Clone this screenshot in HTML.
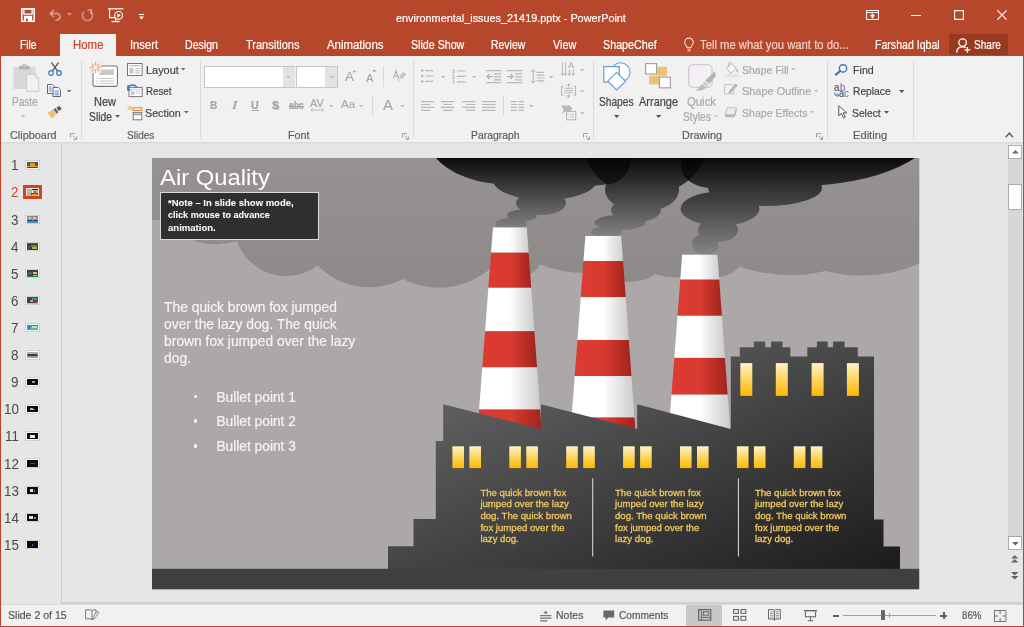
<!DOCTYPE html>
<html>
<head>
<meta charset="utf-8">
<title>PowerPoint</title>
<style>
*{box-sizing:border-box;margin:0;padding:0}
html,body{width:1024px;height:627px;overflow:hidden;background:#e6e6e6;font-family:"Liberation Sans",sans-serif;}
#app{position:absolute;left:0;top:0;width:1024px;height:627px;overflow:hidden;background:#e6e6e6;will-change:transform;}
.abs{position:absolute}
.t{position:absolute;white-space:nowrap;line-height:1;display:block;-webkit-text-stroke-width:.2px}
</style>
</head>
<body>
<div id="app">
<div class="abs" style="left:0px;top:0px;width:1024px;height:56px;background:#b7472a;"></div>
<div class="abs" style="left:60px;top:34px;width:56px;height:22px;background:#f1f1f1;"></div>
<svg class="abs" style="left:21px;top:8px;overflow:visible" width="14" height="14" viewBox="0 0 14 14"><path d="M0.8 0.8H13.2V13.2H0.8Z" fill="none" stroke="#fff" stroke-width="1.6"/><path d="M2.9 1H11.1V6.2H2.9Z" fill="none" stroke="#fff" stroke-width="1.3"/><path d="M2.9 7.8H11.1V13H2.9Z" fill="#fff"/><path d="M5 10.6H6.8V13.4H5Z" fill="#b7472a"/></svg>
<svg class="abs" style="left:48.5px;top:9px;overflow:visible" width="14" height="12" viewBox="0 0 14 12"><g fill="none" stroke="#fff" stroke-opacity=".4" stroke-width="1.9"><path d="M1.4 4.5H8A4 3.4 0 0 1 8 11.1H6.4"/><path d="M5 0.8L1.3 4.5L5 8.2"/></g></svg>
<svg class="abs" style="left:67.3px;top:13.1px" width="5.0" height="2.8" viewBox="0 0 5.0 2.8"><path d="M0 0H5.0L2.5 2.8Z" fill="rgba(255,255,255,.42)"/></svg>
<svg class="abs" style="left:81.3px;top:9px;overflow:visible" width="13" height="12" viewBox="0 0 13 12"><g fill="none" stroke="#fff" stroke-opacity=".36" stroke-width="1.9"><path d="M9.4 2.6A5 5 0 1 1 3.2 2.8"/><path d="M6.4 1H10.4V5"/></g></svg>
<svg class="abs" style="left:108px;top:8px;overflow:visible" width="16" height="15" viewBox="0 0 16 15"><g fill="none" stroke="#fff" stroke-width="1.2"><path d="M0 0.8H15.4"/><path d="M1.6 1V9.6H7"/><path d="M7.7 10V13.2"/><path d="M3.5 13.6H11.6"/><circle cx="10.6" cy="7.4" r="3.9"/></g><path d="M9.4 5.3L12.8 7.4L9.4 9.5Z" fill="#fff"/></svg>
<svg class="abs" style="left:139px;top:14px;overflow:visible" width="5" height="6" viewBox="0 0 5 6"><path d="M0 0.5H5" stroke="#fff" stroke-width="1"/><path d="M0 2.6H5L2.5 5.6Z" fill="#fff"/></svg>
<span class="t" style="left:395.50px;top:12.00px;font-size:11.6px;color:#fff;transform:scaleX(0.9362);transform-origin:0 0;">environmental_issues_21419.pptx - PowerPoint</span>
<svg class="abs" style="left:865.5px;top:10px;overflow:visible" width="13" height="10" viewBox="0 0 13 10"><g fill="none" stroke="#fff" stroke-width="1"><path d="M0.5 0.5H12.5V9.5H0.5Z"/><path d="M0.5 2.6H12.5"/></g><path d="M6.5 3.6L9.3 6.3H7.4V8.6H5.6V6.3H3.7Z" fill="#fff"/></svg>
<div class="abs" style="left:911px;top:15px;width:9.5px;height:1.2px;background:#fff;"></div>
<svg class="abs" style="left:953.5px;top:10px;overflow:visible" width="10" height="10" viewBox="0 0 10 10"><path d="M0.6 0.6H9.4V9.4H0.6Z" fill="none" stroke="#fff" stroke-width="1.1"/></svg>
<svg class="abs" style="left:996.5px;top:10px;overflow:visible" width="10" height="10" viewBox="0 0 10 10"><path d="M0.4 0.4L9.6 9.6M9.6 0.4L0.4 9.6" fill="none" stroke="#fff" stroke-width="1.1"/></svg>
<span class="t" style="left:20.00px;top:38.53px;font-size:12.6px;color:#fff;transform:scaleX(0.8176);transform-origin:0 0;">File</span>
<span class="t" style="left:72.50px;top:38.53px;font-size:12.6px;color:#c8432b;transform:scaleX(0.9074);transform-origin:0 0;">Home</span>
<span class="t" style="left:129.50px;top:38.53px;font-size:12.6px;color:#fff;transform:scaleX(0.8885);transform-origin:0 0;">Insert</span>
<span class="t" style="left:184.50px;top:38.53px;font-size:12.6px;color:#fff;transform:scaleX(0.8414);transform-origin:0 0;">Design</span>
<span class="t" style="left:245.50px;top:38.53px;font-size:12.6px;color:#fff;transform:scaleX(0.8748);transform-origin:0 0;">Transitions</span>
<span class="t" style="left:326.50px;top:38.53px;font-size:12.6px;color:#fff;transform:scaleX(0.9064);transform-origin:0 0;">Animations</span>
<span class="t" style="left:410.50px;top:38.53px;font-size:12.6px;color:#fff;transform:scaleX(0.8455);transform-origin:0 0;">Slide Show</span>
<span class="t" style="left:491.20px;top:38.53px;font-size:12.6px;color:#fff;transform:scaleX(0.8302);transform-origin:0 0;">Review</span>
<span class="t" style="left:552.50px;top:38.53px;font-size:12.6px;color:#fff;transform:scaleX(0.8603);transform-origin:0 0;">View</span>
<span class="t" style="left:603.00px;top:38.53px;font-size:12.6px;color:#fff;transform:scaleX(0.8533);transform-origin:0 0;">ShapeChef</span>
<svg class="abs" style="left:684px;top:37.5px;overflow:visible" width="10" height="14" viewBox="0 0 10 14"><g fill="none" stroke="#f3d9d2" stroke-width="1.1"><path d="M3 9.5C3 7.6 0.7 6.8 0.7 4.4A4.2 4.2 0 0 1 9.3 4.4C9.3 6.8 7 7.6 7 9.5Z"/><path d="M3.2 11.3H6.8M3.6 13H6.4"/></g></svg>
<span class="t" style="left:699.80px;top:38.53px;font-size:12.6px;color:#f0cfc6;transform:scaleX(0.8959);transform-origin:0 0;">Tell me what you want to do...</span>
<span class="t" style="left:874.70px;top:38.53px;font-size:12.6px;color:#fff;transform:scaleX(0.8397);transform-origin:0 0;">Farshad Iqbal</span>
<div class="abs" style="left:949.3px;top:33.8px;width:58.7px;height:21.2px;background:#98391f;"></div>
<svg class="abs" style="left:955.5px;top:37.5px;overflow:visible" width="15" height="15" viewBox="0 0 15 15"><g fill="none" stroke="#fff" stroke-width="1.3"><circle cx="6.6" cy="4.6" r="3.8"/><path d="M0.6 14.6C0.8 10.6 3.4 8.8 6.6 8.8C8 8.8 9 9.1 9.8 9.6"/><path d="M11.4 9V14.8M8.5 11.9H14.3"/></g></svg>
<span class="t" style="left:973.50px;top:38.53px;font-size:12.6px;color:#fff;transform:scaleX(0.8030);transform-origin:0 0;">Share</span>

<div class="abs" style="left:0px;top:56px;width:1024px;height:86px;background:#f1f1f1;"></div>
<div class="abs" style="left:0px;top:141.6px;width:1024px;height:1.6px;background:#dadada;"></div>
<div class="abs" style="left:0px;top:143.2px;width:1024px;height:1.3px;background:#e1e1e1;"></div>
<svg class="abs" style="left:12.5px;top:63.5px;overflow:visible" width="27" height="28" viewBox="0 0 27 28"><rect x="0.5" y="3" width="22" height="22" rx="1" fill="#d9d7d9"/><path d="M6 3.2V1.8H9A2.4 2.4 0 0 1 13.6 1.8H16.6V5.4H6Z" fill="#b4b2b4"/><circle cx="11.3" cy="2.2" r="0.9" fill="#e4e2e4"/><path d="M13.7 10.3H22.2L25.8 13.9V27.3H13.7Z" fill="#f3eff3" stroke="#cbc8cb" stroke-width="0.9"/><path d="M22.2 10.3V13.9H25.8" fill="none" stroke="#cbc8cb" stroke-width="0.9"/></svg>
<span class="t" style="left:11.90px;top:96.00px;font-size:12.4px;color:#a8a8a8;transform:scaleX(0.8105);transform-origin:0 0;">Paste</span>
<svg class="abs" style="left:21.4px;top:114.7px" width="4.600000000000001" height="2.58" viewBox="0 0 4.600000000000001 2.58"><path d="M0 0H4.600000000000001L2.3000000000000007 2.58Z" fill="#bdbdbd"/></svg>
<svg class="abs" style="left:47.5px;top:62px;overflow:visible" width="14" height="14" viewBox="0 0 14 14"><g fill="none" stroke="#555" stroke-width="1.3"><path d="M3.4 0.4L9.6 9.2M10.6 0.4L4.4 9.2"/></g><g fill="none" stroke="#3b78c4" stroke-width="1.2"><circle cx="3" cy="11" r="2.3"/><circle cx="11" cy="11" r="2.3"/></g></svg>
<svg class="abs" style="left:47px;top:84px;overflow:visible" width="14" height="13" viewBox="0 0 14 13"><g fill="#fff" stroke="#666" stroke-width="1"><path d="M0.5 0.5H5.6L7.6 2.5V9.5H0.5Z"/><path d="M6 3.5H11.2L13.5 5.8V12.5H6Z"/></g><path d="M1.8 3H4.8M1.8 5H4.8M1.8 7H4.8M7.5 7H12M7.5 9H12M7.5 10.8H12" stroke="#3b78c4" stroke-width="0.9"/></svg>
<svg class="abs" style="left:67.4px;top:89.8px" width="4.3999999999999915" height="2.46" viewBox="0 0 4.3999999999999915 2.46"><path d="M0 0H4.3999999999999915L2.1999999999999957 2.46Z" fill="#666"/></svg>
<svg class="abs" style="left:47px;top:105.5px;overflow:visible" width="15" height="13" viewBox="0 0 15 13"><path d="M0.4 6.8L6.2 3.6L9.4 8.2L5.2 12.6Z" fill="#eec06c"/><path d="M6.4 3.2L8.6 2L11.4 6.2L9.6 7.8Z" fill="#666"/><path d="M9.4 1.4L12.6 0L14.6 3L11.8 5Z" fill="#555"/></svg>
<span class="t" style="left:9.80px;top:128.68px;font-size:11.6px;color:#5c5c5c;transform:scaleX(0.9385);transform-origin:0 0;">Clipboard</span>
<svg class="abs" style="left:70px;top:132.5px;overflow:visible" width="7" height="6.5" viewBox="0 0 7 6.5"><path d="M0.5 4.5V0.5H5" fill="none" stroke="#a2a2a2" stroke-width="1"/><path d="M2.6 2.6L6.4 6.2M6.6 3.4V6.4H3.6" fill="none" stroke="#a2a2a2" stroke-width="1"/></svg>
<div class="abs" style="left:80.5px;top:60.5px;width:1px;height:77.5px;background:#dadada;"></div>
<svg class="abs" style="left:90px;top:62px;overflow:visible" width="28" height="25" viewBox="0 0 28 25"><rect x="3" y="4" width="24.4" height="20.4" rx="1.6" fill="#fff" stroke="#777" stroke-width="1.1"/><rect x="9" y="7.4" width="15" height="5.6" fill="#c9c9c9"/><path d="M6.4 16.4H8M9.6 16.4H24M6.4 19H8M9.6 19H24M6.4 21.4H8M9.6 21.4H24" stroke="#c4c4c4" stroke-width="1"/><rect x="0" y="0" width="11" height="11" fill="#f1f1f1"/><g stroke="#eab54a" stroke-width="1.3"><path d="M5.5 0V11M0 5.5H11M1.6 1.6L9.4 9.4M9.4 1.6L1.6 9.4"/></g><circle cx="5.5" cy="5.5" r="1.9" fill="#f1f1f1"/></svg>
<span class="t" style="left:94.00px;top:96.00px;font-size:12.4px;color:#444444;transform:scaleX(0.8869);transform-origin:0 0;">New</span>
<span class="t" style="left:89.00px;top:111.00px;font-size:12.4px;color:#444444;transform:scaleX(0.8341);transform-origin:0 0;">Slide</span>
<svg class="abs" style="left:114.8px;top:115.2px" width="5.0" height="2.8" viewBox="0 0 5.0 2.8"><path d="M0 0H5.0L2.5 2.8Z" fill="#555"/></svg>
<svg class="abs" style="left:126.8px;top:62.8px;overflow:visible" width="16" height="13" viewBox="0 0 16 13"><rect x="0.5" y="0.5" width="14.6" height="12" fill="#fff" stroke="#777" stroke-width="1"/><path d="M2.4 2.8H13.2" stroke="#bbb" stroke-width="1.2"/><rect x="2.4" y="5" width="4.2" height="5.6" fill="#c9c9c9"/><path d="M8 5.6H13M8 7.8H13M8 10H13" stroke="#bbb" stroke-width="1"/></svg>
<span class="t" style="left:145.50px;top:63.78px;font-size:11.6px;color:#444444;transform:scaleX(0.9417);transform-origin:0 0;">Layout</span>
<svg class="abs" style="left:181.4px;top:68.4px" width="4.400000000000006" height="2.46" viewBox="0 0 4.400000000000006 2.46"><path d="M0 0H4.400000000000006L2.200000000000003 2.46Z" fill="#666"/></svg>
<svg class="abs" style="left:126.5px;top:84px;overflow:visible" width="16" height="13" viewBox="0 0 16 13"><rect x="2" y="3.4" width="13.2" height="9.2" fill="#fff" stroke="#777" stroke-width="1"/><rect x="4" y="7" width="3.6" height="4" fill="#c9c9c9"/><path d="M9 7.4H13.4M9 9.2H13.4M4 5.4H13.4" stroke="#c4c4c4" stroke-width="0.9"/><path d="M1 6.4V1.6" stroke="#3b78c4" stroke-width="1.4"/><path d="M1 3.6C2.6 0.6 7.6 0 9.8 3.2" fill="none" stroke="#3b78c4" stroke-width="1.5"/><path d="M0.2 6.6H4.2L0.2 2.8Z" fill="#3b78c4"/></svg>
<span class="t" style="left:145.50px;top:85.28px;font-size:11.6px;color:#444444;transform:scaleX(0.8415);transform-origin:0 0;">Reset</span>
<svg class="abs" style="left:127px;top:104.6px;overflow:visible" width="16" height="15.5" viewBox="0 0 16 15.5"><g stroke="#eab54a" stroke-width="0.6"><path d="M3 0V6M0 3H6M0.9 0.9L5.1 5.1M5.1 0.9L0.9 5.1"/></g><rect x="6.2" y="2.8" width="8.6" height="2.6" fill="#fff" stroke="#e8823c" stroke-width="1.1"/><rect x="6.2" y="7.4" width="8.6" height="7.4" fill="#fff" stroke="#777" stroke-width="1"/><path d="M6.2 9.4H14.8" stroke="#999" stroke-width="1.6"/></svg>
<span class="t" style="left:145.30px;top:106.78px;font-size:11.6px;color:#444444;transform:scaleX(0.9252);transform-origin:0 0;">Section</span>
<svg class="abs" style="left:184.3px;top:111.1px" width="4.699999999999989" height="2.63" viewBox="0 0 4.699999999999989 2.63"><path d="M0 0H4.699999999999989L2.3499999999999943 2.63Z" fill="#666"/></svg>
<span class="t" style="left:126.60px;top:128.68px;font-size:11.6px;color:#5c5c5c;transform:scaleX(0.8640);transform-origin:0 0;">Slides</span>
<div class="abs" style="left:199.5px;top:60.5px;width:1px;height:77.5px;background:#dadada;"></div>
<div class="abs" style="left:204px;top:66.3px;width:91.4px;height:21.6px;background:#fff;border:1px solid #c6c6c6"></div>
<div class="abs" style="left:282.5px;top:67.3px;width:12px;height:19.6px;background:#e3e3e3;"></div>
<svg class="abs" style="left:286.4px;top:76.0px" width="4.400000000000034" height="2.46" viewBox="0 0 4.400000000000034 2.46"><path d="M0 0H4.400000000000034L2.200000000000017 2.46Z" fill="#bdbdbd"/></svg>
<div class="abs" style="left:296px;top:66.3px;width:42.4px;height:21.6px;background:#fff;border:1px solid #c6c6c6"></div>
<div class="abs" style="left:325.4px;top:67.3px;width:12px;height:19.6px;background:#e3e3e3;"></div>
<svg class="abs" style="left:329.5px;top:76.0px" width="4.399999999999977" height="2.46" viewBox="0 0 4.399999999999977 2.46"><path d="M0 0H4.399999999999977L2.1999999999999886 2.46Z" fill="#bdbdbd"/></svg>
<span class="t" style="left:344.60px;top:70.49px;font-size:13.6px;color:#a8a8a8;transform:scaleX(0.9921);transform-origin:0 0;">A</span>
<svg class="abs" style="left:352px;top:70.2px;overflow:visible" width="4.6" height="2.3" viewBox="0 0 4.6 2.3"><path d="M0 2.3H4.6L2.3 0Z" fill="#b0b0b0"/></svg>
<span class="t" style="left:365.60px;top:73.03px;font-size:10.6px;color:#a8a8a8;transform:scaleX(1.0466);transform-origin:0 0;">A</span>
<svg class="abs" style="left:372.2px;top:70.0px" width="4.600000000000023" height="2.58" viewBox="0 0 4.600000000000023 2.58"><path d="M0 0H4.600000000000023L2.3000000000000114 2.58Z" fill="#b0b0b0"/></svg>
<div class="abs" style="left:383.3px;top:66.3px;width:1px;height:20.5px;background:#d8d8d8;"></div>
<svg class="abs" style="left:392.5px;top:69.8px;overflow:visible" width="14" height="14" viewBox="0 0 14 14"><path d="M6 6.4L10.4 1.6L13.4 4.4L9 9.4Z" fill="#c9c9c9"/><path d="M5.2 7.6L8 10.4L6.6 12L3.6 9.4Z" fill="#dcdcdc"/><path d="M0.4 8.6L3 0.8L5.6 8.6M1.3 6H4.7" fill="none" stroke="#b0b0b0" stroke-width="1.1"/></svg>
<span class="t" style="left:209.90px;top:99.55px;font-size:11.4px;color:#a8a8a8;font-weight:bold;transform:scaleX(0.8867);transform-origin:0 0;">B</span>
<span class="t" style="left:230.60px;top:99.07px;font-size:12.2px;color:#a8a8a8;font-style:italic;transform:scaleX(1.7703);transform-origin:0 0;font-family:'Liberation Serif',serif;-webkit-text-stroke-width:.1px;">I</span>
<span class="t" style="left:251.00px;top:100.09px;font-size:11px;color:#a4a4a4;font-weight:bold;transform:scaleX(0.9693);transform-origin:0 0;">U</span>
<div class="abs" style="left:251px;top:110.4px;width:7.8px;height:1px;background:#a8a8a8;"></div>
<span class="t" style="left:272.30px;top:99.61px;font-size:11.8px;color:#a0a0a0;font-weight:bold;transform:scaleX(0.8766);transform-origin:0 0;text-shadow:1px 1px 1px #c8c8c8;">S</span>
<span class="t" style="left:289.00px;top:100.73px;font-size:10px;color:#a4a4a4;font-weight:bold;transform:scaleX(0.8647);transform-origin:0 0;">abc</span>
<div class="abs" style="left:288.6px;top:105.6px;width:15.6px;height:1px;background:#a8a8a8;"></div>
<span class="t" style="left:310.00px;top:98.03px;font-size:10.6px;color:#a8a8a8;transform:scaleX(1.0259);transform-origin:0 0;">AV</span>
<svg class="abs" style="left:309.6px;top:107.6px;overflow:visible" width="14.4" height="4" viewBox="0 0 14.4 4"><path d="M1 2H13.4M2.6 0.4L0.8 2L2.6 3.6M11.8 0.4L13.6 2L11.8 3.6" fill="none" stroke="#b4b4b4" stroke-width="0.9"/></svg>
<svg class="abs" style="left:328.5px;top:104.9px" width="4.399999999999977" height="2.46" viewBox="0 0 4.399999999999977 2.46"><path d="M0 0H4.399999999999977L2.1999999999999886 2.46Z" fill="#bdbdbd"/></svg>
<span class="t" style="left:340.50px;top:99.41px;font-size:11.8px;color:#a8a8a8;transform:scaleX(0.9769);transform-origin:0 0;">Aa</span>
<svg class="abs" style="left:359.3px;top:104.9px" width="4.399999999999977" height="2.46" viewBox="0 0 4.399999999999977 2.46"><path d="M0 0H4.399999999999977L2.1999999999999886 2.46Z" fill="#bdbdbd"/></svg>
<div class="abs" style="left:372.3px;top:95.5px;width:1px;height:20px;background:#d8d8d8;"></div>
<span class="t" style="left:382.60px;top:98.35px;font-size:14px;color:#a8a8a8;transform:scaleX(1.0708);transform-origin:0 0;">A</span>
<svg class="abs" style="left:400.2px;top:104.9px" width="4.600000000000023" height="2.58" viewBox="0 0 4.600000000000023 2.58"><path d="M0 0H4.600000000000023L2.3000000000000114 2.58Z" fill="#bdbdbd"/></svg>
<span class="t" style="left:287.80px;top:128.68px;font-size:11.6px;color:#5c5c5c;transform:scaleX(0.9263);transform-origin:0 0;">Font</span>
<svg class="abs" style="left:402.3px;top:132.5px;overflow:visible" width="7" height="6.5" viewBox="0 0 7 6.5"><path d="M0.5 4.5V0.5H5" fill="none" stroke="#a2a2a2" stroke-width="1"/><path d="M2.6 2.6L6.4 6.2M6.6 3.4V6.4H3.6" fill="none" stroke="#a2a2a2" stroke-width="1"/></svg>
<div class="abs" style="left:412.8px;top:60.5px;width:1px;height:77.5px;background:#dadada;"></div>
<svg class="abs" style="left:420.8px;top:69.4px;overflow:visible" width="13" height="14" viewBox="0 0 13 14"><g fill="#b4b4b4"><circle cx="1.3" cy="1.6" r="1.2"/><circle cx="1.3" cy="7" r="1.2"/><circle cx="1.3" cy="12.4" r="1.2"/></g><path d="M4.4 1.6H12.4M4.4 7H12.4M4.4 12.4H12.4" stroke="#b8b8b8" stroke-width="1.2"/></svg>
<svg class="abs" style="left:440.7px;top:76.0px" width="4.400000000000034" height="2.46" viewBox="0 0 4.400000000000034 2.46"><path d="M0 0H4.400000000000034L2.200000000000017 2.46Z" fill="#bdbdbd"/></svg>
<svg class="abs" style="left:452px;top:69px;overflow:visible" width="14" height="15" viewBox="0 0 14 15"><path d="M5 2H13.8M5 7.4H13.8M5 12.8H13.8" stroke="#b8b8b8" stroke-width="1.2"/><g fill="none" stroke="#b0b0b0" stroke-width="0.9"><path d="M0.6 1L1.8 0.4V3.4M0.4 3.6H3"/><path d="M0.4 6C1.4 5.2 2.8 5.8 2.2 7L0.4 9H3"/><path d="M0.4 11C2.4 10.4 3 12.2 1.2 12.6C3.2 12.8 2.8 14.8 0.4 14.2"/></g></svg>
<svg class="abs" style="left:472.3px;top:76.0px" width="4.399999999999977" height="2.46" viewBox="0 0 4.399999999999977 2.46"><path d="M0 0H4.399999999999977L2.1999999999999886 2.46Z" fill="#bdbdbd"/></svg>
<svg class="abs" style="left:486px;top:69.6px;overflow:visible" width="15.4" height="13.4" viewBox="0 0 15.4 13.4"><path d="M0 0.7H15.2M8 3.8H15.2M8 6.8H15.2M8 9.8H15.2M0 12.7H15.2" stroke="#b8b8b8" stroke-width="1.2"/><path d="M6.6 6.6H1.4M3.6 4L1 6.6L3.6 9.2" fill="none" stroke="#b0b0b0" stroke-width="1.2"/></svg>
<svg class="abs" style="left:506.8px;top:69.6px;overflow:visible" width="15.4" height="13.4" viewBox="0 0 15.4 13.4"><path d="M0 0.7H15.2M8 3.8H15.2M8 6.8H15.2M8 9.8H15.2M0 12.7H15.2" stroke="#b8b8b8" stroke-width="1.2"/><path d="M0.4 6.6H5.6M3.4 4L6 6.6L3.4 9.2" fill="none" stroke="#b0b0b0" stroke-width="1.2"/></svg>
<svg class="abs" style="left:531px;top:69.2px;overflow:visible" width="14" height="14.8" viewBox="0 0 14 14.8"><path d="M5.6 3.4H13.4M5.6 6.2H13.4M5.6 9H13.4M5.6 11.8H13.4" stroke="#b8b8b8" stroke-width="1.2"/><path d="M2.2 0.8V14M0.2 3L2.2 0.8L4.2 3M0.2 11.8L2.2 14L4.2 11.8" fill="none" stroke="#b0b0b0" stroke-width="1"/></svg>
<svg class="abs" style="left:549px;top:76.0px" width="4.600000000000023" height="2.58" viewBox="0 0 4.600000000000023 2.58"><path d="M0 0H4.600000000000023L2.3000000000000114 2.58Z" fill="#bdbdbd"/></svg>
<svg class="abs" style="left:420.8px;top:100.8px;overflow:visible" width="13.4" height="11.6" viewBox="0 0 13.4 11.6"><path d="M0.0 0.6H13.2M0.0 3.5H9.2M0.0 6.4H13.2M0.0 9.3H9.2" stroke="#b8b8b8" stroke-width="1.2" fill="none"/></svg>
<svg class="abs" style="left:441px;top:100.8px;overflow:visible" width="13.4" height="11.6" viewBox="0 0 13.4 11.6"><path d="M0.0 0.6H13.4M2.4 3.5H11.0M0.0 6.4H13.4M2.0 9.3H11.4" stroke="#b8b8b8" stroke-width="1.2" fill="none"/></svg>
<svg class="abs" style="left:462px;top:100.8px;overflow:visible" width="13.4" height="11.6" viewBox="0 0 13.4 11.6"><path d="M0.2 0.6H13.4M4.2 3.5H13.4M0.2 6.4H13.4M4.2 9.3H13.4" stroke="#b8b8b8" stroke-width="1.2" fill="none"/></svg>
<svg class="abs" style="left:482.4px;top:100.8px;overflow:visible" width="13.6" height="11.6" viewBox="0 0 13.6 11.6"><path d="M0.0 0.6H13.6M0.0 3.5H13.6M0.0 6.4H13.6M0.0 9.3H13.6" stroke="#b8b8b8" stroke-width="1.2" fill="none"/></svg>
<div class="abs" style="left:503.3px;top:95.5px;width:1px;height:20px;background:#d8d8d8;"></div>
<svg class="abs" style="left:511px;top:100.8px;overflow:visible" width="13" height="12" viewBox="0 0 13 12"><path d="M0 0.6H5.8M7.2 0.6H13M0 3.5H5.8M7.2 3.5H13M0 6.4H5.8M7.2 6.4H13M0 9.3H5.8M7.2 9.3H13" stroke="#b8b8b8" stroke-width="1.2"/></svg>
<svg class="abs" style="left:529.3px;top:104.9px" width="4.600000000000023" height="2.58" viewBox="0 0 4.600000000000023 2.58"><path d="M0 0H4.600000000000023L2.3000000000000114 2.58Z" fill="#bdbdbd"/></svg>
<svg class="abs" style="left:561px;top:62px;overflow:visible" width="15" height="15" viewBox="0 0 15 15"><path d="M1.4 0.4V13M0 11.4L1.4 13.6L2.8 11.4M4.6 0.4V13M3.2 11.4L4.6 13.6L6 11.4M8.4 7.4V13M7 11.4L8.4 13.6L9.8 11.4M12.2 7.4V13M10.8 11.4L12.2 13.6L13.6 11.4" fill="none" stroke="#b0b0b0" stroke-width="0.9"/><path d="M7.6 6L10.2 0.4L12.8 6M8.4 4.2H12" fill="none" stroke="#b0b0b0" stroke-width="1"/></svg>
<svg class="abs" style="left:580px;top:68.5px" width="4.600000000000023" height="2.58" viewBox="0 0 4.600000000000023 2.58"><path d="M0 0H4.600000000000023L2.3000000000000114 2.58Z" fill="#bdbdbd"/></svg>
<svg class="abs" style="left:561px;top:83.2px;overflow:visible" width="15.2" height="15" viewBox="0 0 15.2 15"><path d="M2.4 3.2H0.6V12.2H2.4M12.8 3.2H14.6V12.2H12.8" fill="none" stroke="#b0b0b0" stroke-width="1"/><path d="M3.4 5.4H11.8M3.4 7.6H11.8M3.4 9.8H11.8" stroke="#c4c4c4" stroke-width="1.1"/><path d="M5.4 2.6L7.6 0.2L9.8 2.6ZM5.4 12.6L7.6 15L9.8 12.6Z" fill="#b8b8b8"/><path d="M7.6 1V4M7.6 11V14" stroke="#b8b8b8" stroke-width="1"/></svg>
<svg class="abs" style="left:580px;top:90.2px" width="4.600000000000023" height="2.58" viewBox="0 0 4.600000000000023 2.58"><path d="M0 0H4.600000000000023L2.3000000000000114 2.58Z" fill="#bdbdbd"/></svg>
<svg class="abs" style="left:561px;top:104.6px;overflow:visible" width="15.4" height="15.4" viewBox="0 0 15.4 15.4"><path d="M0.4 0.4H8.6L11.4 3.4L9 6.6H3.6L0.4 9.4L2.6 5Z" fill="#b9b9b9"/><rect x="5.6" y="6.6" width="9.2" height="8.2" fill="#f4f0f4" stroke="#b0b0b0" stroke-width="1"/><path d="M7.4 9.4H8.4M9.6 9.4H13M7.4 12H8.4M9.6 12H13" stroke="#b8b8b8" stroke-width="1"/></svg>
<svg class="abs" style="left:580px;top:111.8px" width="4.600000000000023" height="2.58" viewBox="0 0 4.600000000000023 2.58"><path d="M0 0H4.600000000000023L2.3000000000000114 2.58Z" fill="#bdbdbd"/></svg>
<span class="t" style="left:470.80px;top:128.68px;font-size:11.6px;color:#5c5c5c;transform:scaleX(0.8953);transform-origin:0 0;">Paragraph</span>
<svg class="abs" style="left:582.7px;top:132.5px;overflow:visible" width="7" height="6.5" viewBox="0 0 7 6.5"><path d="M0.5 4.5V0.5H5" fill="none" stroke="#a2a2a2" stroke-width="1"/><path d="M2.6 2.6L6.4 6.2M6.6 3.4V6.4H3.6" fill="none" stroke="#a2a2a2" stroke-width="1"/></svg>
<div class="abs" style="left:593.3px;top:60.5px;width:1px;height:77.5px;background:#dadada;"></div>
<svg class="abs" style="left:602.6px;top:62px;overflow:visible" width="29" height="29" viewBox="0 0 29 29"><circle cx="17.6" cy="10.2" r="9.4" fill="#fff" stroke="#6a9fd6" stroke-width="1.1"/><rect x="0.8" y="4.6" width="15.4" height="15.4" fill="#fff" stroke="#6a9fd6" stroke-width="1.3"/><path d="M13.6 10.4L22.6 19.2L13.6 28L4.8 19.2Z" fill="#fff" stroke="#6a9fd6" stroke-width="1.2"/></svg>
<span class="t" style="left:599.40px;top:96.00px;font-size:12.4px;color:#444444;transform:scaleX(0.8203);transform-origin:0 0;">Shapes</span>
<svg class="abs" style="left:614px;top:114.7px" width="5.399999999999977" height="3.02" viewBox="0 0 5.399999999999977 3.02"><path d="M0 0H5.399999999999977L2.6999999999999886 3.02Z" fill="#555"/></svg>
<svg class="abs" style="left:645px;top:63.4px;overflow:visible" width="26.4" height="25.6" viewBox="0 0 26.4 25.6"><rect x="12.2" y="3.8" width="9.8" height="9" fill="#ecc370"/><rect x="4" y="12.6" width="10.6" height="8.8" fill="#ecc370"/><rect x="0.6" y="0.6" width="11" height="10.4" fill="#fff" stroke="#a2a2a2" stroke-width="1.2"/><rect x="14.4" y="14.2" width="11" height="10.6" fill="#fff" stroke="#a2a2a2" stroke-width="1.2"/></svg>
<span class="t" style="left:638.90px;top:96.00px;font-size:12.4px;color:#444444;transform:scaleX(0.8863);transform-origin:0 0;">Arrange</span>
<svg class="abs" style="left:656.3px;top:114.7px" width="5.2000000000000455" height="2.91" viewBox="0 0 5.2000000000000455 2.91"><path d="M0 0H5.2000000000000455L2.6000000000000227 2.91Z" fill="#555"/></svg>
<svg class="abs" style="left:688px;top:64px;overflow:visible" width="28" height="28" viewBox="0 0 28 28"><rect x="0.7" y="0.7" width="23.4" height="22.6" rx="4.6" fill="#f4eff4" stroke="#cdcdcd" stroke-width="1.3"/><path d="M27.4 7L27.6 12.4L21.4 19.8L17 16.4Z" fill="#b4b4b4"/><path d="M16.4 17.4L20.6 20.6L18.8 22.8L14.6 19.6Z" fill="#c9c9c9"/><path d="M14.2 20.2L18.2 23.2C16.4 26.6 10.6 27 7 26.8C10.4 25.4 11.4 22 14.2 20.2Z" fill="#bdbdbd"/></svg>
<span class="t" style="left:686.70px;top:96.00px;font-size:12.4px;color:#a8a8a8;transform:scaleX(0.9149);transform-origin:0 0;">Quick</span>
<span class="t" style="left:682.80px;top:111.00px;font-size:12.4px;color:#a8a8a8;transform:scaleX(0.8233);transform-origin:0 0;">Styles</span>
<svg class="abs" style="left:714px;top:115.4px" width="4" height="2.24" viewBox="0 0 4 2.24"><path d="M0 0H4L2.0 2.24Z" fill="#c4c4c4"/></svg>
<svg class="abs" style="left:724px;top:61.6px;overflow:visible" width="15" height="15" viewBox="0 0 15 15"><path d="M2.4 6.6L7.6 1.6L12.2 6.4L7 11.2Z" fill="#fbf8fb" stroke="#b4b4b4" stroke-width="1"/><path d="M4.4 4.6V1.8C4.4 -0.2 7.2 -0.2 7.2 1.8V2" fill="none" stroke="#b4b4b4" stroke-width="1"/><path d="M12.6 6.6C14.2 8.4 14.6 9.6 13.4 10.2C12.2 10.4 12 8.6 12.6 6.6Z" fill="#b4b4b4"/><rect x="0" y="12.2" width="14.6" height="2.8" fill="#e6dfe6"/></svg>
<span class="t" style="left:741.50px;top:63.78px;font-size:11.6px;color:#a8a8a8;transform:scaleX(0.9034);transform-origin:0 0;">Shape Fill</span>
<svg class="abs" style="left:791px;top:68.4px" width="4.600000000000023" height="2.58" viewBox="0 0 4.600000000000023 2.58"><path d="M0 0H4.600000000000023L2.3000000000000114 2.58Z" fill="#c4c4c4"/></svg>
<svg class="abs" style="left:724px;top:83px;overflow:visible" width="15" height="12" viewBox="0 0 15 12"><path d="M8.4 1.6H0.6V10.8H9.8V7" fill="none" stroke="#c0c0c0" stroke-width="1"/><path d="M11.4 0.6L13.8 2.6L7 9.8L4.2 10.8L5 8Z" fill="#b8b8b8"/></svg>
<span class="t" style="left:741.50px;top:85.28px;font-size:11.6px;color:#a8a8a8;transform:scaleX(0.9426);transform-origin:0 0;">Shape Outline</span>
<svg class="abs" style="left:813.6px;top:89.9px" width="4.600000000000023" height="2.58" viewBox="0 0 4.600000000000023 2.58"><path d="M0 0H4.600000000000023L2.3000000000000114 2.58Z" fill="#c4c4c4"/></svg>
<svg class="abs" style="left:724px;top:106.8px;overflow:visible" width="14" height="11" viewBox="0 0 14 11"><path d="M3.4 0.8H12.6L10.2 7.8H0.8Z" fill="#f0ebf0" stroke="#c0c0c0" stroke-width="1"/><path d="M0.8 7.8H10.2L12.8 1.4V3.4L10.6 10.2H1.4Z" fill="#b4b4b4"/></svg>
<span class="t" style="left:741.50px;top:106.68px;font-size:11.6px;color:#a8a8a8;transform:scaleX(0.9095);transform-origin:0 0;">Shape Effects</span>
<svg class="abs" style="left:810px;top:111.2px" width="4.600000000000023" height="2.58" viewBox="0 0 4.600000000000023 2.58"><path d="M0 0H4.600000000000023L2.3000000000000114 2.58Z" fill="#c4c4c4"/></svg>
<span class="t" style="left:682.40px;top:128.68px;font-size:11.6px;color:#5c5c5c;transform:scaleX(0.9424);transform-origin:0 0;">Drawing</span>
<svg class="abs" style="left:816px;top:132.5px;overflow:visible" width="7" height="6.5" viewBox="0 0 7 6.5"><path d="M0.5 4.5V0.5H5" fill="none" stroke="#a2a2a2" stroke-width="1"/><path d="M2.6 2.6L6.4 6.2M6.6 3.4V6.4H3.6" fill="none" stroke="#a2a2a2" stroke-width="1"/></svg>
<div class="abs" style="left:827.4px;top:60.5px;width:1px;height:77.5px;background:#dadada;"></div>
<svg class="abs" style="left:835px;top:63.6px;overflow:visible" width="13" height="12" viewBox="0 0 13 12"><circle cx="8" cy="4.4" r="3.6" fill="#fff" stroke="#3b78c4" stroke-width="1.5"/><path d="M5.2 7L0.8 10.6" stroke="#3b78c4" stroke-width="2.2" stroke-linecap="round"/></svg>
<span class="t" style="left:852.50px;top:63.78px;font-size:11.6px;color:#444444;transform:scaleX(0.9217);transform-origin:0 0;">Find</span>
<span class="t" style="left:833.90px;top:81.93px;font-size:10.6px;color:#555;transform:scaleX(0.9329);transform-origin:0 0;">a</span>
<span class="t" style="left:839.70px;top:81.93px;font-size:10.6px;color:#9a5fc4;transform:scaleX(0.9160);transform-origin:0 0;">b</span>
<span class="t" style="left:838.90px;top:88.43px;font-size:10.6px;color:#555;transform:scaleX(0.8651);transform-origin:0 0;">a</span>
<span class="t" style="left:844.20px;top:88.43px;font-size:10.6px;color:#4d8fd6;transform:scaleX(0.9057);transform-origin:0 0;">c</span>
<svg class="abs" style="left:833.8px;top:92.4px;overflow:visible" width="5" height="5" viewBox="0 0 5 5"><path d="M1 0.4V3.2H4.6M3 1.6L4.8 3.2L3 4.8" fill="none" stroke="#3b78c4" stroke-width="1"/></svg>
<span class="t" style="left:852.50px;top:85.28px;font-size:11.6px;color:#444444;transform:scaleX(0.8834);transform-origin:0 0;">Replace</span>
<svg class="abs" style="left:899.2px;top:89.9px" width="5.399999999999977" height="3.02" viewBox="0 0 5.399999999999977 3.02"><path d="M0 0H5.399999999999977L2.6999999999999886 3.02Z" fill="#555"/></svg>
<svg class="abs" style="left:837.6px;top:105.2px;overflow:visible" width="10" height="14" viewBox="0 0 10 14"><path d="M0.8 0.8V10.8L3.4 8.4L5.4 12.8L7.2 12L5.2 7.8H8.6Z" fill="#fff" stroke="#555" stroke-width="1"/></svg>
<span class="t" style="left:852.30px;top:106.68px;font-size:11.6px;color:#444444;transform:scaleX(0.8902);transform-origin:0 0;">Select</span>
<svg class="abs" style="left:883.8px;top:111.1px" width="5.0" height="2.8" viewBox="0 0 5.0 2.8"><path d="M0 0H5.0L2.5 2.8Z" fill="#555"/></svg>
<span class="t" style="left:853.30px;top:128.68px;font-size:11.6px;color:#5c5c5c;transform:scaleX(0.9614);transform-origin:0 0;">Editing</span>
<div class="abs" style="left:913px;top:60.5px;width:1px;height:77.5px;background:#dadada;"></div>
<svg class="abs" style="left:1005.4px;top:132px;overflow:visible" width="8.6" height="6" viewBox="0 0 8.6 6"><path d="M0.6 5.2L4.3 1.2L8 5.2" fill="none" stroke="#666" stroke-width="1.5"/></svg>

<div class="abs" style="left:61px;top:145px;width:1px;height:458px;background:#c9c9c9;"></div>
<span class="t" style="left:10.95px;top:157.81px;font-size:14.4px;color:#484848;transform:scaleX(0.9300);transform-origin:0 0;-webkit-text-stroke-width:0;">1</span>
<div class="abs" style="left:25.3px;top:160.29999999999998px;width:14.4px;height:9.5px;background:#fbfbfb;border:1px solid #d0d0d0;"></div>
<div class="abs" style="left:27px;top:161.95px;width:11px;height:6.5px;background:#55534f;"></div>
<div class="abs" style="left:29.7px;top:163.36px;width:5.41px;height:2.28px;background:#d8a018;"></div>
<div class="abs" style="left:27.0px;top:165.64px;width:11.0px;height:1.58px;background:#f0a01c;"></div>
<div class="abs" style="left:27.0px;top:167.22px;width:11.0px;height:1.23px;background:#2c5a2c;"></div>
<span class="t" style="left:10.95px;top:184.81px;font-size:14.4px;color:#d2452c;transform:scaleX(0.9300);transform-origin:0 0;-webkit-text-stroke-width:0;">2</span>
<div class="abs" style="left:23.3px;top:184.99999999999997px;width:18.7px;height:14px;background:#d4431f;"></div>
<div class="abs" style="left:26px;top:187.99999999999997px;width:13px;height:8.4px;background:#fbeeea;"></div>
<div class="abs" style="left:27px;top:189.05px;width:11px;height:6.5px;background:#b4b0ae;"></div>
<div class="abs" style="left:31.87px;top:189.05px;width:6.13px;height:1.05px;background:#2a2a2a;"></div>
<div class="abs" style="left:31.87px;top:190.28px;width:1.44px;height:2.64px;background:#f0f0f0;"></div>
<div class="abs" style="left:34.21px;top:190.81px;width:2.16px;height:2.28px;background:#d8484a;"></div>
<div class="abs" style="left:31.15px;top:193.09px;width:6.67px;height:2.28px;background:#4a4a42;"></div>
<div class="abs" style="left:32.05px;top:193.62px;width:4.87px;height:1.05px;background:#d8b030;"></div>
<div class="abs" style="left:27.54px;top:191.33px;width:2.34px;height:0.7px;background:#d8c8a0;"></div>
<span class="t" style="left:10.95px;top:212.81px;font-size:14.4px;color:#484848;transform:scaleX(0.9300);transform-origin:0 0;-webkit-text-stroke-width:0;">3</span>
<div class="abs" style="left:25.3px;top:214.49999999999997px;width:14.4px;height:9.5px;background:#fbfbfb;border:1px solid #d0d0d0;"></div>
<div class="abs" style="left:27px;top:216.15px;width:11px;height:6.5px;background:#9a9a9a;"></div>
<div class="abs" style="left:27.0px;top:216.15px;width:11.0px;height:1.76px;background:#888;"></div>
<div class="abs" style="left:28.8px;top:217.2px;width:2.7px;height:1.41px;background:#cfcfcf;"></div>
<div class="abs" style="left:32.86px;top:217.03px;width:3.61px;height:1.58px;background:#c4c4c4;"></div>
<div class="abs" style="left:27.0px;top:219.66px;width:11.0px;height:1.41px;background:#3a3a3a;"></div>
<div class="abs" style="left:27.0px;top:220.89px;width:11.0px;height:1.76px;background:#1e9ae0;"></div>
<div class="abs" style="left:31.51px;top:220.19px;width:2.7px;height:1.23px;background:#c8502a;"></div>
<span class="t" style="left:10.95px;top:239.81px;font-size:14.4px;color:#484848;transform:scaleX(0.9300);transform-origin:0 0;-webkit-text-stroke-width:0;">4</span>
<div class="abs" style="left:25.3px;top:241.6px;width:14.4px;height:9.5px;background:#fbfbfb;border:1px solid #d0d0d0;"></div>
<div class="abs" style="left:27px;top:243.25px;width:11px;height:6.5px;background:#3c3c3c;"></div>
<div class="abs" style="left:27.0px;top:243.25px;width:11.0px;height:1.05px;background:#555;"></div>
<div class="abs" style="left:31.06px;top:244.66px;width:5.86px;height:2.11px;background:#2a9a4a;"></div>
<div class="abs" style="left:27.72px;top:245.53px;width:2.7px;height:2.99px;background:#5a5a5a;"></div>
<div class="abs" style="left:31.51px;top:247.29px;width:5.95px;height:1.58px;background:#e0a030;"></div>
<span class="t" style="left:10.95px;top:266.81px;font-size:14.4px;color:#484848;transform:scaleX(0.9300);transform-origin:0 0;-webkit-text-stroke-width:0;">5</span>
<div class="abs" style="left:25.3px;top:268.70000000000005px;width:14.4px;height:9.5px;background:#fbfbfb;border:1px solid #d0d0d0;"></div>
<div class="abs" style="left:27px;top:270.35px;width:11px;height:6.5px;background:#3e3e3e;"></div>
<div class="abs" style="left:27.9px;top:271.76px;width:3.97px;height:3.16px;background:#5a5a5a;"></div>
<div class="abs" style="left:32.77px;top:271.76px;width:4.33px;height:0.88px;background:#d8c070;"></div>
<div class="abs" style="left:32.77px;top:273.16px;width:4.33px;height:0.88px;background:#c8c8c8;"></div>
<div class="abs" style="left:32.77px;top:274.57px;width:4.33px;height:0.88px;background:#d8c070;"></div>
<div class="abs" style="left:27.0px;top:275.97px;width:11.0px;height:0.88px;background:#1e8a3e;"></div>
<span class="t" style="left:10.95px;top:293.81px;font-size:14.4px;color:#484848;transform:scaleX(0.9300);transform-origin:0 0;-webkit-text-stroke-width:0;">6</span>
<div class="abs" style="left:25.3px;top:295.8px;width:14.4px;height:9.5px;background:#fbfbfb;border:1px solid #d0d0d0;"></div>
<div class="abs" style="left:27px;top:297.45px;width:11px;height:6.5px;background:#3d4858;"></div>
<div class="abs" style="left:27.54px;top:300.09px;width:2.16px;height:2.28px;background:#2a3248;"></div>
<div class="abs" style="left:29.7px;top:299.56px;width:3.07px;height:2.11px;background:#d8a828;"></div>
<div class="abs" style="left:32.41px;top:297.98px;width:4.15px;height:2.28px;background:#3a9a7a;"></div>
<div class="abs" style="left:34.75px;top:301.49px;width:3.25px;height:1.41px;background:#d03030;"></div>
<div class="abs" style="left:27.0px;top:302.9px;width:11.0px;height:1.05px;background:#b8b8b8;"></div>
<span class="t" style="left:10.95px;top:320.81px;font-size:14.4px;color:#484848;transform:scaleX(0.9300);transform-origin:0 0;-webkit-text-stroke-width:0;">7</span>
<div class="abs" style="left:25.3px;top:322.90000000000003px;width:14.4px;height:9.5px;background:#fbfbfb;border:1px solid #d0d0d0;"></div>
<div class="abs" style="left:27px;top:324.55px;width:11px;height:6.5px;background:#48b89a;"></div>
<div class="abs" style="left:27.0px;top:324.55px;width:11.0px;height:1.05px;background:#3a8a9a;"></div>
<div class="abs" style="left:27.54px;top:325.96px;width:2.89px;height:3.16px;background:#2a78d0;"></div>
<div class="abs" style="left:32.41px;top:325.78px;width:5.05px;height:1.93px;background:#c8d8d0;"></div>
<div class="abs" style="left:30.61px;top:328.06px;width:6.85px;height:1.41px;background:#38c8c0;"></div>
<div class="abs" style="left:27.0px;top:329.82px;width:11.0px;height:1.23px;background:#e4f0ea;"></div>
<span class="t" style="left:10.95px;top:347.81px;font-size:14.4px;color:#484848;transform:scaleX(0.9300);transform-origin:0 0;-webkit-text-stroke-width:0;">8</span>
<div class="abs" style="left:25.3px;top:350.0px;width:14.4px;height:9.5px;background:#fbfbfb;border:1px solid #d0d0d0;"></div>
<div class="abs" style="left:27px;top:351.65px;width:11px;height:6.5px;background:#6a6a6a;"></div>
<div class="abs" style="left:27.0px;top:352.18px;width:11.0px;height:1.41px;background:#b0b0b0;"></div>
<div class="abs" style="left:27.54px;top:353.93px;width:9.92px;height:2.11px;background:#3c3c3c;"></div>
<div class="abs" style="left:27.0px;top:356.39px;width:11.0px;height:1.76px;background:#9a9a9a;"></div>
<div class="abs" style="left:28.8px;top:356.57px;width:2.7px;height:0.88px;background:#c8b070;"></div>
<span class="t" style="left:10.95px;top:374.81px;font-size:14.4px;color:#484848;transform:scaleX(0.9300);transform-origin:0 0;-webkit-text-stroke-width:0;">9</span>
<div class="abs" style="left:25.3px;top:377.1px;width:14.4px;height:9.5px;background:#fbfbfb;border:1px solid #d0d0d0;"></div>
<div class="abs" style="left:27px;top:378.75px;width:11px;height:6.5px;background:#0c0c0c;"></div>
<div class="abs" style="left:31.51px;top:381.03px;width:3.07px;height:2.28px;background:#9a9a9a;"></div>
<span class="t" style="left:3.50px;top:401.81px;font-size:14.4px;color:#484848;transform:scaleX(0.9300);transform-origin:0 0;-webkit-text-stroke-width:0;">10</span>
<div class="abs" style="left:25.3px;top:404.20000000000005px;width:14.4px;height:9.5px;background:#fbfbfb;border:1px solid #d0d0d0;"></div>
<div class="abs" style="left:27px;top:405.85px;width:11px;height:6.5px;background:#0c0c0c;"></div>
<div class="abs" style="left:30.25px;top:408.31px;width:2.89px;height:2.11px;background:#e8a868;"></div>
<div class="abs" style="left:33.31px;top:409.01px;width:1.8px;height:1.41px;background:#d87830;"></div>
<span class="t" style="left:4.50px;top:428.81px;font-size:14.4px;color:#484848;transform:scaleX(0.9300);transform-origin:0 0;-webkit-text-stroke-width:0;">11</span>
<div class="abs" style="left:25.3px;top:431.3px;width:14.4px;height:9.5px;background:#fbfbfb;border:1px solid #d0d0d0;"></div>
<div class="abs" style="left:27px;top:432.95px;width:11px;height:6.5px;background:#0c0c0c;"></div>
<div class="abs" style="left:30.07px;top:434.71px;width:5.05px;height:3.16px;background:#f0f0e8;"></div>
<span class="t" style="left:3.50px;top:456.81px;font-size:14.4px;color:#484848;transform:scaleX(0.9300);transform-origin:0 0;-webkit-text-stroke-width:0;">12</span>
<div class="abs" style="left:25.3px;top:458.40000000000003px;width:14.4px;height:9.5px;background:#fbfbfb;border:1px solid #d0d0d0;"></div>
<div class="abs" style="left:27px;top:460.05px;width:11px;height:6.5px;background:#0c0c0c;"></div>
<div class="abs" style="left:29.7px;top:462.69px;width:5.77px;height:1.05px;background:#6a4a20;"></div>
<span class="t" style="left:3.50px;top:483.81px;font-size:14.4px;color:#484848;transform:scaleX(0.9300);transform-origin:0 0;-webkit-text-stroke-width:0;">13</span>
<div class="abs" style="left:25.3px;top:485.50000000000006px;width:14.4px;height:9.5px;background:#fbfbfb;border:1px solid #d0d0d0;"></div>
<div class="abs" style="left:27px;top:487.15px;width:11px;height:6.5px;background:#0c0c0c;"></div>
<div class="abs" style="left:29.7px;top:488.73px;width:3.43px;height:3.51px;background:#e8e4dc;"></div>
<div class="abs" style="left:33.67px;top:490.14px;width:1.8px;height:2.11px;background:#7a7aa8;"></div>
<span class="t" style="left:3.50px;top:510.81px;font-size:14.4px;color:#484848;transform:scaleX(0.9300);transform-origin:0 0;-webkit-text-stroke-width:0;">14</span>
<div class="abs" style="left:25.3px;top:512.6px;width:14.4px;height:9.5px;background:#fbfbfb;border:1px solid #d0d0d0;"></div>
<div class="abs" style="left:27px;top:514.25px;width:11px;height:6.5px;background:#0c0c0c;"></div>
<div class="abs" style="left:29.34px;top:516.01px;width:3.97px;height:3.34px;background:#dcdce4;"></div>
<div class="abs" style="left:33.85px;top:516.89px;width:1.98px;height:2.46px;background:#8a8ab0;"></div>
<span class="t" style="left:3.50px;top:537.81px;font-size:14.4px;color:#484848;transform:scaleX(0.9300);transform-origin:0 0;-webkit-text-stroke-width:0;">15</span>
<div class="abs" style="left:25.3px;top:539.7px;width:14.4px;height:9.5px;background:#fbfbfb;border:1px solid #d0d0d0;"></div>
<div class="abs" style="left:27px;top:541.35px;width:11px;height:6.5px;background:#0c0c0c;"></div>
<div class="abs" style="left:31.51px;top:543.81px;width:1.44px;height:2.11px;background:#2a78c8;"></div>

<svg class="abs" style="left:0;top:0" width="1024" height="627" viewBox="0 0 1024 627"><defs><linearGradient id="gs1" gradientUnits="userSpaceOnUse" x1="0" y1="158" x2="0" y2="232"><stop offset="0" stop-color="#0b0b0b"/><stop offset="1" stop-color="#888686"/></linearGradient><linearGradient id="gs2" gradientUnits="userSpaceOnUse" x1="0" y1="158" x2="0" y2="240"><stop offset="0" stop-color="#0b0b0b"/><stop offset="1" stop-color="#888686"/></linearGradient><linearGradient id="gs3" gradientUnits="userSpaceOnUse" x1="0" y1="158" x2="0" y2="256"><stop offset="0" stop-color="#0b0b0b"/><stop offset="1" stop-color="#888686"/></linearGradient><linearGradient id="gw" x1="0" y1="0" x2="1" y2="0"><stop offset="0" stop-color="#ffffff"/><stop offset=".5" stop-color="#ffffff"/><stop offset="1" stop-color="#c9c9c9"/></linearGradient><linearGradient id="gr" x1="0" y1="0" x2="1" y2="0"><stop offset="0" stop-color="#dc3b31"/><stop offset=".52" stop-color="#d83a30"/><stop offset="1" stop-color="#9c231c"/></linearGradient><linearGradient id="gy" x1="0" y1="0" x2="0" y2="1"><stop offset="0" stop-color="#fff3cc"/><stop offset=".45" stop-color="#fed868"/><stop offset="1" stop-color="#fdb900"/></linearGradient><linearGradient id="gb" gradientUnits="userSpaceOnUse" x1="440" y1="400" x2="588" y2="735"><stop offset="0" stop-color="#606060"/><stop offset="1" stop-color="#161616"/></linearGradient><linearGradient id="gbank" gradientUnits="userSpaceOnUse" x1="0" y1="158" x2="0" y2="288"><stop offset="0" stop-color="#969291"/><stop offset="1" stop-color="#8e8a89"/></linearGradient><clipPath id="sl"><rect x="152" y="158" width="767.2" height="431.3"/></clipPath><clipPath id="p1c"><path d="M435.4,157 L436,158 C448,172 470,181 493,183.5 L597,185.5 L606,184.6 C620,183.6 631,173 631,158 L631,157 Z"/></clipPath><clipPath id="p2c"><ellipse cx="645" cy="148" rx="60" ry="47"/></clipPath></defs><g clip-path="url(#sl)"><rect x="152" y="157" width="768" height="433" fill="#aca8a7"/><path d="M152,157 L152,220 L163,220.4 A70 70 0 0 0 237,241 A52 52 0 0 0 317.5,265.6 A73 73 0 0 0 403,279 A79 79 0 0 0 503,255 A19.5 19.5 0 0 0 540,264.6 A120 120 0 0 0 600,272 A49 49 0 0 0 655.6,274.2 A60 60 0 0 0 700,272 A30 30 0 0 0 739.3,266.7 A158 158 0 0 0 825.4,270.9 A147 147 0 0 0 920,263.2 V157 Z" fill="url(#gbank)"/><g fill="url(#gs1)"><path d="M435.4,157 L436,158 C448,172 470,181 493,183.5 L597,185.5 L606,184.6 C620,183.6 631,173 631,158 L631,157 Z"/><ellipse cx="545" cy="180" rx="52" ry="20"/><ellipse cx="541" cy="203" rx="25" ry="12"/><ellipse cx="522" cy="215.5" rx="15" ry="6"/><ellipse cx="511" cy="224" rx="15.5" ry="6"/></g><g fill="url(#gs2)"><ellipse cx="645" cy="148" rx="60" ry="47"/><ellipse cx="642" cy="190" rx="37" ry="22"/><ellipse cx="636" cy="210" rx="25" ry="12"/><ellipse cx="620" cy="222.5" rx="25.5" ry="7.5"/><ellipse cx="606.5" cy="232" rx="15.5" ry="5.5"/></g><g fill="url(#gs3)"><ellipse cx="798" cy="120" rx="143" ry="66"/><ellipse cx="711" cy="166" rx="30" ry="22"/><ellipse cx="765" cy="188" rx="57" ry="18"/><ellipse cx="720" cy="208.7" rx="39.4" ry="17"/><ellipse cx="718" cy="230" rx="20" ry="12"/><ellipse cx="705.3" cy="244.3" rx="13" ry="11"/></g><g clip-path="url(#p1c)"><ellipse cx="645" cy="148" rx="60" ry="47" fill="#000" fill-opacity=".55"/></g><g clip-path="url(#p2c)"><g opacity=".55" fill="#000"><ellipse cx="798" cy="120" rx="143" ry="66"/><ellipse cx="711" cy="166" rx="30" ry="22"/></g></g><clipPath id="cc1"><polygon points="493,227.2 526.8,227.2 541.68,431 477.45,431"/></clipPath><g clip-path="url(#cc1)"><rect x="489.03" y="227.2" width="41.70" height="25.50" fill="url(#gw)"/><rect x="486.72" y="252.7" width="46.23" height="35.10" fill="url(#gr)"/><rect x="483.72" y="287.8" width="52.09" height="43.40" fill="url(#gw)"/><rect x="480.68" y="331.2" width="58.03" height="36.20" fill="url(#gr)"/><rect x="477.70" y="367.4" width="63.87" height="42.10" fill="url(#gw)"/><rect x="475.27" y="409.5" width="68.62" height="21.50" fill="url(#gr)"/></g><clipPath id="cc2"><polygon points="585.4,235.8 621.2,235.8 635.45,431 570.51,431"/></clipPath><g clip-path="url(#cc2)"><rect x="581.44" y="235.8" width="43.68" height="25.20" fill="url(#gw)"/><rect x="579.10" y="261" width="48.26" height="36.20" fill="url(#gr)"/><rect x="576.08" y="297.2" width="54.16" height="42.80" fill="url(#gw)"/><rect x="573.07" y="340" width="60.05" height="36.10" fill="url(#gr)"/><rect x="570.12" y="376.1" width="65.84" height="41.40" fill="url(#gw)"/><rect x="568.02" y="417.5" width="69.94" height="13.50" fill="url(#gr)"/></g><clipPath id="cc3"><polygon points="682.2,254.4 717.4,254.4 730.29,431 668.73,431"/></clipPath><g clip-path="url(#cc3)"><rect x="678.24" y="254.4" width="43.08" height="25.20" fill="url(#gw)"/><rect x="675.90" y="279.6" width="47.66" height="36.20" fill="url(#gr)"/><rect x="672.91" y="315.8" width="53.51" height="42.10" fill="url(#gw)"/><rect x="669.90" y="357.9" width="59.40" height="36.80" fill="url(#gr)"/><rect x="667.11" y="394.7" width="64.86" height="36.30" fill="url(#gw)"/></g><path d="M443.2,404.3 L540.8,428.9 V404.3 L637.2,428.9 V404.3 L730.8,428.9 V356.6 H739.8 V347.2 H753.9 V341.6 H765.2 V347.2 H771.1 V341.6 H782.5 V347.2 H790.3 V356.6 H807.3 V347.2 H816.9 V341.6 H827.7 V347.2 H833.1 V341.6 H844.5 V347.2 H857.8 V356.6 H874 V519.5 H883.5 V546.5 H900 V569 H388 V546.3 H413.5 V519.1 H435.8 V441 H443.2 Z" fill="url(#gb)"/><rect x="152" y="568.8" width="768" height="21.2" fill="#404040"/><rect x="452.4" y="446.3" width="11.6" height="21.8" fill="url(#gy)"/><rect x="469.4" y="446.3" width="11.6" height="21.8" fill="url(#gy)"/><rect x="509.3" y="446.3" width="11.6" height="21.8" fill="url(#gy)"/><rect x="526.3" y="446.3" width="11.6" height="21.8" fill="url(#gy)"/><rect x="566.2" y="446.3" width="11.6" height="21.8" fill="url(#gy)"/><rect x="583.2" y="446.3" width="11.6" height="21.8" fill="url(#gy)"/><rect x="623.1" y="446.3" width="11.6" height="21.8" fill="url(#gy)"/><rect x="640.1" y="446.3" width="11.6" height="21.8" fill="url(#gy)"/><rect x="680.0" y="446.3" width="11.6" height="21.8" fill="url(#gy)"/><rect x="697.0" y="446.3" width="11.6" height="21.8" fill="url(#gy)"/><rect x="736.9" y="446.3" width="11.6" height="21.8" fill="url(#gy)"/><rect x="753.9" y="446.3" width="11.6" height="21.8" fill="url(#gy)"/><rect x="793.8" y="446.3" width="11.6" height="21.8" fill="url(#gy)"/><rect x="810.8" y="446.3" width="11.6" height="21.8" fill="url(#gy)"/><rect x="740.3" y="363.1" width="12" height="32.8" fill="url(#gy)"/><rect x="775.8" y="363.1" width="12" height="32.8" fill="url(#gy)"/><rect x="811.6" y="363.1" width="12" height="32.8" fill="url(#gy)"/><rect x="846.9" y="363.1" width="12" height="32.8" fill="url(#gy)"/><rect x="592.2" y="478.4" width="1" height="78" fill="#e0e0e0"/><rect x="737.9" y="478.4" width="1" height="78" fill="#e0e0e0"/></g></svg>
<span class="t" style="left:160.00px;top:167.25px;font-size:22.5px;color:#ffffff;transform:scaleX(1.0580);transform-origin:0 0;-webkit-text-stroke-width:0;">Air Quality</span>
<div class="abs" style="left:160px;top:192px;width:158.8px;height:47.6px;background:#2f2f2f;border:1px solid #d9d9d9;"></div>
<span class="t" style="left:168.00px;top:197.86px;font-size:9.5px;color:#fff;font-weight:bold;-webkit-text-stroke-width:0.05px;">*Note – In slide show mode,</span>
<span class="t" style="left:168.00px;top:210.26px;font-size:9.5px;color:#fff;font-weight:bold;transform:scaleX(0.9544);transform-origin:0 0;-webkit-text-stroke-width:0.05px;">click mouse to advance</span>
<span class="t" style="left:168.00px;top:222.66px;font-size:9.5px;color:#fff;font-weight:bold;transform:scaleX(1.0041);transform-origin:0 0;-webkit-text-stroke-width:0.05px;">animation.</span>
<span class="t" style="left:164.10px;top:300.80px;font-size:13.82px;color:#f4f4f4;-webkit-text-stroke:0.2px #f4f4f4;">The quick brown fox jumped</span>
<span class="t" style="left:164.10px;top:317.70px;font-size:13.82px;color:#f4f4f4;-webkit-text-stroke:0.2px #f4f4f4;">over the lazy dog. The quick</span>
<span class="t" style="left:164.10px;top:334.60px;font-size:13.82px;color:#f4f4f4;-webkit-text-stroke:0.2px #f4f4f4;">brown fox jumped over the lazy</span>
<span class="t" style="left:164.10px;top:351.50px;font-size:13.82px;color:#f4f4f4;-webkit-text-stroke:0.2px #f4f4f4;">dog.</span>
<div class="abs" style="left:193.7px;top:394.9px;width:3.6px;height:3.6px;background:#fafafa;border-radius:50%;"></div>
<span class="t" style="left:216.40px;top:389.56px;font-size:13.75px;color:#f4f4f4;transform:translateY(0.6px);transform-origin:0 0;-webkit-text-stroke:0.2px #f4f4f4;">Bullet point 1</span>
<div class="abs" style="left:193.7px;top:419.1px;width:3.6px;height:3.6px;background:#fafafa;border-radius:50%;"></div>
<span class="t" style="left:216.40px;top:414.21px;font-size:13.75px;color:#f4f4f4;transform:translateY(0.6px);transform-origin:0 0;-webkit-text-stroke:0.2px #f4f4f4;">Bullet point 2</span>
<div class="abs" style="left:193.7px;top:444.4px;width:3.6px;height:3.6px;background:#fafafa;border-radius:50%;"></div>
<span class="t" style="left:216.40px;top:438.86px;font-size:13.75px;color:#f4f4f4;transform:translateY(0.6px);transform-origin:0 0;-webkit-text-stroke:0.2px #f4f4f4;">Bullet point 3</span>
<span class="t" style="left:480.40px;top:487.77px;font-size:9.6px;color:#f0c75e;-webkit-text-stroke:0.3px #f0c75e;">The quick brown fox</span>
<span class="t" style="left:480.40px;top:499.27px;font-size:9.6px;color:#f0c75e;-webkit-text-stroke:0.3px #f0c75e;">jumped over the lazy</span>
<span class="t" style="left:480.40px;top:510.77px;font-size:9.6px;color:#f0c75e;-webkit-text-stroke:0.3px #f0c75e;">dog. The quick brown</span>
<span class="t" style="left:480.40px;top:522.97px;font-size:9.6px;color:#f0c75e;-webkit-text-stroke:0.3px #f0c75e;">fox jumped over the</span>
<span class="t" style="left:480.40px;top:533.77px;font-size:9.6px;color:#f0c75e;-webkit-text-stroke:0.3px #f0c75e;">lazy dog.</span>
<span class="t" style="left:615.00px;top:487.77px;font-size:9.6px;color:#f0c75e;-webkit-text-stroke:0.3px #f0c75e;">The quick brown fox</span>
<span class="t" style="left:615.00px;top:499.27px;font-size:9.6px;color:#f0c75e;-webkit-text-stroke:0.3px #f0c75e;">jumped over the lazy</span>
<span class="t" style="left:615.00px;top:510.77px;font-size:9.6px;color:#f0c75e;-webkit-text-stroke:0.3px #f0c75e;">dog. The quick brown</span>
<span class="t" style="left:615.00px;top:522.97px;font-size:9.6px;color:#f0c75e;-webkit-text-stroke:0.3px #f0c75e;">fox jumped over the</span>
<span class="t" style="left:615.00px;top:533.77px;font-size:9.6px;color:#f0c75e;-webkit-text-stroke:0.3px #f0c75e;">lazy dog.</span>
<span class="t" style="left:754.90px;top:487.77px;font-size:9.6px;color:#f0c75e;-webkit-text-stroke:0.3px #f0c75e;">The quick brown fox</span>
<span class="t" style="left:754.90px;top:499.27px;font-size:9.6px;color:#f0c75e;-webkit-text-stroke:0.3px #f0c75e;">jumped over the lazy</span>
<span class="t" style="left:754.90px;top:510.77px;font-size:9.6px;color:#f0c75e;-webkit-text-stroke:0.3px #f0c75e;">dog. The quick brown</span>
<span class="t" style="left:754.90px;top:522.97px;font-size:9.6px;color:#f0c75e;-webkit-text-stroke:0.3px #f0c75e;">fox jumped over the</span>
<span class="t" style="left:754.90px;top:533.77px;font-size:9.6px;color:#f0c75e;-webkit-text-stroke:0.3px #f0c75e;">lazy dog.</span>

<div class="abs" style="left:1008px;top:145px;width:14px;height:458px;background:#d6d6d6;"></div>
<div class="abs" style="left:1008px;top:145.4px;width:14px;height:13.4px;background:#fff;border:1px solid #ababab;"></div>
<svg class="abs" style="left:1011.6px;top:149.8px;overflow:visible" width="6.8" height="3.6" viewBox="0 0 6.8 3.6"><path d="M0 3.6H6.8L3.4 0Z" fill="#666"/></svg>
<div class="abs" style="left:1008px;top:184.4px;width:14px;height:25.4px;background:#fff;border:1px solid #ababab;"></div>
<div class="abs" style="left:1008px;top:536.4px;width:14px;height:13.8px;background:#fff;border:1px solid #ababab;"></div>
<svg class="abs" style="left:1011.6px;top:541.6px;overflow:visible" width="6.8" height="3.6" viewBox="0 0 6.8 3.6"><path d="M0 0H6.8L3.4 3.6Z" fill="#666"/></svg>
<div class="abs" style="left:1008px;top:550.2px;width:14px;height:53px;background:#e6e6e6;"></div>
<svg class="abs" style="left:1011.4px;top:555px;overflow:visible" width="7.4" height="8" viewBox="0 0 7.4 8"><path d="M0 3.6H7.4L3.7 0ZM0 7.6H7.4L3.7 4Z" fill="#666"/></svg>
<svg class="abs" style="left:1011.4px;top:571.8px;overflow:visible" width="7.4" height="8" viewBox="0 0 7.4 8"><path d="M0 0H7.4L3.7 3.6ZM0 4H7.4L3.7 7.6Z" fill="#666"/></svg>

<div class="abs" style="left:62px;top:602.4px;width:961px;height:1.2px;background:#d0d0d0;"></div>
<div class="abs" style="left:0px;top:603.6px;width:1024px;height:1.6px;background:#dadada;"></div>
<div class="abs" style="left:0px;top:605px;width:1024px;height:22px;background:#f1f1f1;"></div>
<span class="t" style="left:7.50px;top:609.95px;font-size:11.4px;color:#555555;transform:scaleX(0.9262);transform-origin:0 0;">Slide 2 of 15</span>
<svg class="abs" style="left:85px;top:609.4px;overflow:visible" width="15" height="12" viewBox="0 0 15 12"><path d="M0.6 0.8H5.4C6.4 0.8 7 1.6 7 2.4V11C6.6 10.2 6 9.8 5 9.8H0.6ZM7 2.4C7 1.6 7.6 0.8 8.6 0.8H11V5M7 11C7.4 10.2 8 9.8 9 9.8H10" fill="none" stroke="#777" stroke-width="1"/><path d="M12.4 2.2L14 3.6L9.6 9.2L7.8 9.8L8.2 7.8Z" fill="#f1f1f1" stroke="#777" stroke-width="0.9"/></svg>
<svg class="abs" style="left:540px;top:609.8px;overflow:visible" width="11.4" height="11.6" viewBox="0 0 11.4 11.6"><path d="M3.2 3.4H8.2L5.7 0.4Z" fill="#777"/><path d="M0 5.6H11.4M0 8.2H11.4M0 10.8H7.4" stroke="#777" stroke-width="1.2"/></svg>
<span class="t" style="left:555.80px;top:609.95px;font-size:11.4px;color:#555555;transform:scaleX(0.9201);transform-origin:0 0;">Notes</span>
<svg class="abs" style="left:603px;top:610.4px;overflow:visible" width="11.6" height="11" viewBox="0 0 11.6 11"><path d="M0.4 0.4H11.2V7.4H5.4L2.6 10.6V7.4H0.4Z" fill="#686868"/></svg>
<span class="t" style="left:618.80px;top:609.95px;font-size:11.4px;color:#555555;transform:scaleX(0.8963);transform-origin:0 0;">Comments</span>
<div class="abs" style="left:686.2px;top:605.4px;width:35.8px;height:21.6px;background:#c8c8c8;"></div>
<svg class="abs" style="left:698px;top:609.2px;overflow:visible" width="13.4" height="11.8" viewBox="0 0 13.4 11.8"><rect x="0.6" y="0.6" width="12.2" height="10.6" fill="none" stroke="#666" stroke-width="1.2"/><path d="M3.4 0.6V11.2" stroke="#666" stroke-width="1"/><rect x="5.4" y="2.8" width="5.4" height="3.4" fill="none" stroke="#666" stroke-width="1"/><path d="M3.4 8.4H12.8" stroke="#666" stroke-width="1"/></svg>
<svg class="abs" style="left:733px;top:609.2px;overflow:visible" width="13.4" height="12" viewBox="0 0 13.4 12"><g fill="none" stroke="#666" stroke-width="1.1"><rect x="0.6" y="0.6" width="4.8" height="3.8"/><rect x="8" y="0.6" width="4.8" height="3.8"/><rect x="0.6" y="7.4" width="4.8" height="3.8"/><rect x="8" y="7.4" width="4.8" height="3.8"/></g></svg>
<svg class="abs" style="left:768.4px;top:609.2px;overflow:visible" width="12.8" height="11.8" viewBox="0 0 12.8 11.8"><path d="M0.5 0.6H5C6 0.6 6.4 1.2 6.4 1.8V11.2C6.2 10.4 5.6 10 5 10H0.5ZM12.3 0.6H7.8C6.8 0.6 6.4 1.2 6.4 1.8V11.2C6.6 10.4 7.2 10 7.8 10H12.3Z" fill="none" stroke="#666" stroke-width="1"/><path d="M2 2.8H5M2 4.6H5M2 6.4H5M2 8.2H5M7.8 2.8H10.8M7.8 4.6H10.8M7.8 6.4H10.8M7.8 8.2H10.8" stroke="#888" stroke-width="0.8"/></svg>
<svg class="abs" style="left:803.8px;top:610px;overflow:visible" width="13" height="11.4" viewBox="0 0 13 11.4"><path d="M0 0.7H13" stroke="#666" stroke-width="1.4"/><path d="M1.4 1.4V6.8H11.6V1.4" fill="none" stroke="#666" stroke-width="1.1"/><path d="M6.5 6.8V10.4M3.8 10.8H9.2" stroke="#666" stroke-width="1.1"/></svg>
<div class="abs" style="left:833px;top:614.6px;width:5.8px;height:2px;background:#5e5e5e;"></div>
<div class="abs" style="left:843px;top:614.6px;width:93px;height:1px;background:#a0a0a0;"></div>
<div class="abs" style="left:889.2px;top:613px;width:1px;height:4.8px;background:#a0a0a0;"></div>
<div class="abs" style="left:881.2px;top:609.6px;width:3.8px;height:10.8px;background:#666;"></div>
<div class="abs" style="left:940px;top:614.6px;width:7.2px;height:2px;background:#5e5e5e;"></div>
<div class="abs" style="left:942.6px;top:612px;width:2px;height:7.2px;background:#5e5e5e;"></div>
<span class="t" style="left:961.60px;top:609.95px;font-size:11.4px;color:#555555;transform:scaleX(0.8502);transform-origin:0 0;">86%</span>
<svg class="abs" style="left:994px;top:610px;overflow:visible" width="12.4" height="12" viewBox="0 0 12.4 12"><rect x="0.5" y="0.5" width="11.4" height="11" fill="none" stroke="#777" stroke-width="1"/><path d="M6.2 1.4V4.2M5 2.6L6.2 1.4L7.4 2.6M6.2 10.6V7.8M5 9.4L6.2 10.6L7.4 9.4M1.4 6H4.2M2.6 4.8L1.4 6L2.6 7.2M11 6H8.2M9.8 4.8L11 6L9.8 7.2" fill="none" stroke="#777" stroke-width="0.8"/></svg>

<div class="abs" style="left:0;top:0;width:1024px;height:627px;border:1px solid #b7472a;border-left:1px solid #c0412b;border-bottom:1px solid #c2422a"></div>
</div>
</body>
</html>
